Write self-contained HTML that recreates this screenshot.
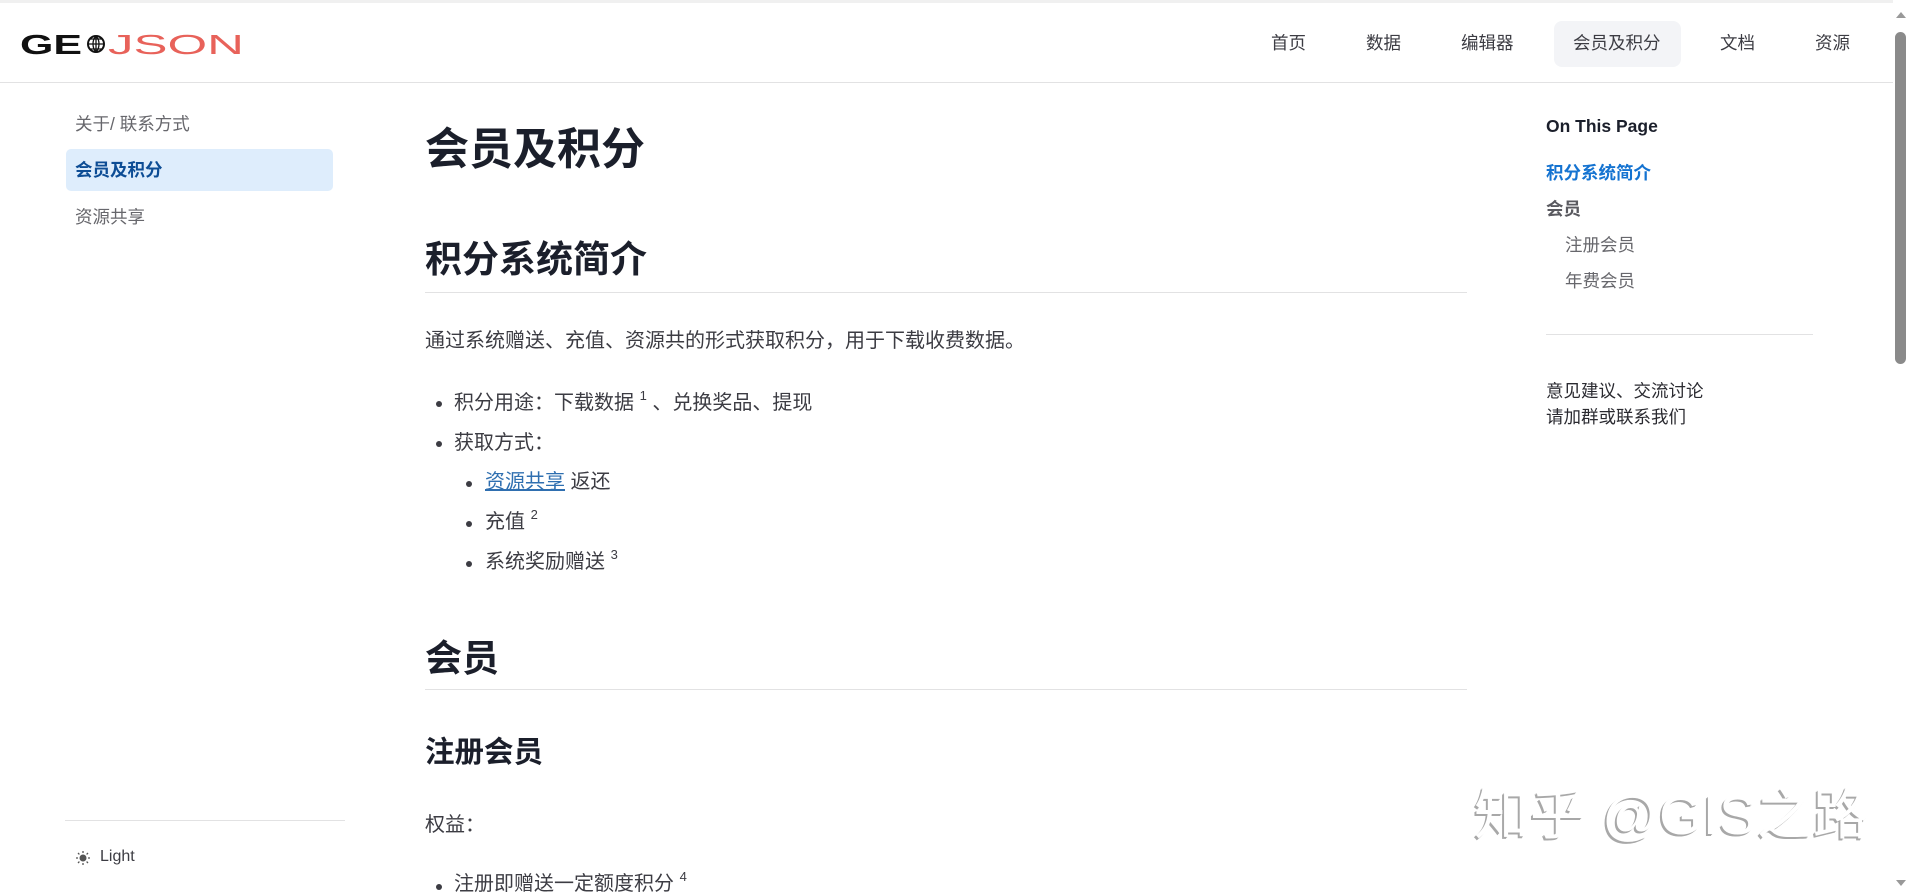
<!DOCTYPE html>
<html><head><meta charset="utf-8"><style>
*{margin:0;padding:0;box-sizing:border-box}
body{width:1910px;height:895px;overflow:hidden;background:#fff;font-family:"Liberation Sans","Noto Sans CJK SC",sans-serif;color:#3c3c43;position:relative}
.abs{position:absolute;white-space:nowrap}
.hdr{position:absolute;left:0;top:0;width:1893px;height:83px;border-bottom:1px solid #e2e2e3;border-top:3px solid #f0f0f0}
.nav{font-size:17.5px;color:#3c3c43;line-height:20px}
.side{font-size:17.5px;color:#67676c;line-height:20px}
.main{color:#3c3c43;font-size:20px;line-height:24px}
h1,h2,h3{position:absolute;color:#1b1f2b;font-weight:700;white-space:nowrap}
.hr{position:absolute;left:425px;width:1042px;height:1px;background:#e2e2e3}
.dot{position:absolute;width:6px;height:6px;border-radius:50%;background:#3c3c43}
sup{font-size:13px;vertical-align:9px;line-height:0}
</style></head><body>
<div class="hdr"></div>
<svg class="abs" style="left:20px;top:30px" width="230" height="28" viewBox="0 0 230 28">
<text x="0" y="24" font-family="Liberation Sans" font-weight="700" font-size="28" fill="#111" textLength="62" lengthAdjust="spacingAndGlyphs">GE</text>
<circle cx="76" cy="14" r="8" fill="none" stroke="#111" stroke-width="2"/>
<path d="M68 14h16M76 6v16M70 9h12M70 19h12M76 6c-4 4-4 12 0 16M76 6c4 4 4 12 0 16" stroke="#111" stroke-width="1.3" fill="none"/>
<text x="88" y="24" font-family="Liberation Sans" font-size="28" fill="#e8625a" textLength="136" lengthAdjust="spacingAndGlyphs">JSON</text>
</svg>
<div class="abs" style="left:1554px;top:21px;width:127px;height:46px;background:#f3f4f7;border-radius:8px"></div>
<div class="abs nav" style="left:1271px;top:33px">首页</div>
<div class="abs nav" style="left:1366px;top:33px">数据</div>
<div class="abs nav" style="left:1461px;top:33px">编辑器</div>
<div class="abs nav" style="left:1573px;top:33px">会员及积分</div>
<div class="abs nav" style="left:1720px;top:33px">文档</div>
<div class="abs nav" style="left:1815px;top:33px">资源</div>
<div class="abs" style="left:1895px;top:32px;width:11px;height:332px;background:#8a8a8a;border-radius:6px"></div>
<div class="abs" style="left:1896px;top:12px;width:0;height:0;border-left:5px solid transparent;border-right:5px solid transparent;border-bottom:6px solid #999"></div>
<div class="abs" style="left:1896px;top:880px;width:0;height:0;border-left:5px solid transparent;border-right:5px solid transparent;border-top:6px solid #999"></div>

<div class="abs side" style="left:75px;top:114px">关于/ 联系方式</div>
<div class="abs" style="left:66px;top:149px;width:267px;height:42px;background:#deedfc;border-radius:5px"></div>
<div class="abs side" style="left:75px;top:160px;color:#0d4d95;font-weight:700">会员及积分</div>
<div class="abs side" style="left:75px;top:207px">资源共享</div>
<div class="abs" style="left:65px;top:820px;width:280px;height:1px;background:#e2e2e3"></div>
<svg class="abs" style="left:75px;top:850px" width="16" height="16" viewBox="0 0 16 16"><circle cx="8" cy="8" r="3.5" fill="#555"/><path d="M8 1v2M8 13v2M1 8h2M13 8h2M3 3l1.4 1.4M11.6 11.6L13 13M3 13l1.4-1.4M11.6 4.4L13 3" stroke="#555" stroke-width="1.3"/></svg>
<div class="abs" style="left:100px;top:848px;font-size:16px;color:#3c3c43">Light</div>

<h1 style="left:425px;top:124px;font-size:44px;line-height:52px">会员及积分</h1>
<h2 style="left:425px;top:238px;font-size:37px;line-height:44px">积分系统简介</h2>
<div class="hr" style="top:292px"></div>
<div class="abs main" style="left:425px;top:329px">通过系统赠送、充值、资源共的形式获取积分，用于下载收费数据。</div>
<div class="dot" style="left:436px;top:401px"></div>
<div class="abs main" style="left:454px;top:391px">积分用途：下载数据 <sup>1</sup> 、兑换奖品、提现</div>
<div class="dot" style="left:436px;top:441px"></div>
<div class="abs main" style="left:454px;top:431px">获取方式：</div>
<div class="dot" style="left:466px;top:481px"></div>
<div class="abs main" style="left:485px;top:470px"><span style="color:#2f6fb0;text-decoration:underline">资源共享</span> 返还</div>
<div class="dot" style="left:466px;top:521px"></div>
<div class="abs main" style="left:485px;top:510px">充值 <sup>2</sup></div>
<div class="dot" style="left:466px;top:561px"></div>
<div class="abs main" style="left:485px;top:550px">系统奖励赠送 <sup>3</sup></div>
<h2 style="left:425px;top:637px;font-size:37px;line-height:44px">会员</h2>
<div class="hr" style="top:689px"></div>
<h3 style="left:425px;top:736px;font-size:29.5px;line-height:34px">注册会员</h3>
<div class="abs main" style="left:425px;top:813px">权益：</div>
<div class="dot" style="left:436px;top:884px"></div>
<div class="abs main" style="left:454px;top:872px">注册即赠送一定额度积分 <sup>4</sup></div>

<div class="abs" style="left:1546px;top:116px;font-size:17.5px;font-weight:700;color:#1b1f2b">On This Page</div>
<div class="abs side" style="left:1546px;top:163px;color:#1473d1;font-weight:700">积分系统简介</div>
<div class="abs side" style="left:1546px;top:199px;font-weight:700;color:#5a5a60">会员</div>
<div class="abs side" style="left:1565px;top:235px">注册会员</div>
<div class="abs side" style="left:1565px;top:271px">年费会员</div>
<div class="abs" style="left:1546px;top:334px;width:267px;height:1px;background:#e2e2e3"></div>
<div class="abs" style="left:1546px;top:378px;font-size:17.5px;color:#2a2a30;line-height:26px">意见建议、交流讨论<br>请加群或联系我们</div>

<div class="abs" style="left:1474px;top:784px;font-size:55px;line-height:62px;color:#fff;text-shadow:-2px 2px 0 #a8a8a8,-1px 1px 0 #bbb;letter-spacing:1px">知乎 @GIS之路</div>
</body></html>
